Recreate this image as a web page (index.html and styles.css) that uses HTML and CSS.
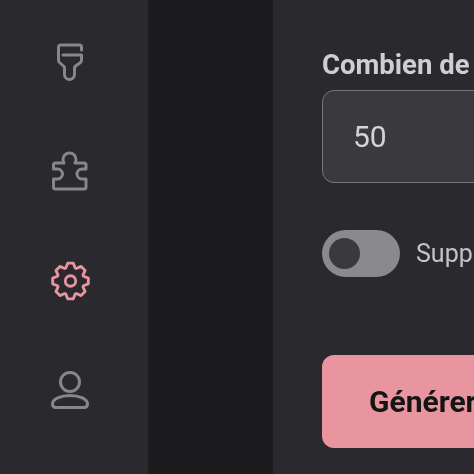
FILE: index.html
```html
<!DOCTYPE html>
<html lang="fr">
<head>
<meta charset="utf-8">
<title>Paramètres</title>
<link rel="stylesheet" href="styles.css">
</head>
<body>
<div class="app">
  <nav class="sidebar">
    <svg class="icon" viewBox="0 0 48 48" width="48" height="48"><path d="M35.500 14V11a2 2 0 0 0-2-2H15a2.500 2.500 0 0 0-2.500 2.500V24a3 3 0 0 0 1 2.500l4.500 4a2 2 0 0 1 .5 1.500V38.500a5 5 0 0 0 10 0V32a2 2 0 0 1 .5-1.500l5.500-4a3 3 0 0 0 1-2.500V19H17"/></svg>
    <svg class="icon" viewBox="0 -2 48 48" width="48" height="48"><path d="M9.500 15H18c-1-1.500-1-3-1-3.500a6.500 6.500 0 0 1 13 0c0 .5 0 2-1 3.500H38a2 2 0 0 1 2 2v4h-4a5 5 0 0 0 0 10h4v8a2 2 0 0 1-2 2H9.500a2 2 0 0 1-2-2V31h4a5 5 0 0 0 0-10h-4v-4a2 2 0 0 1 2-2z"/></svg>
    <svg class="icon active" viewBox="0 -2 48 48" width="48" height="48"><g transform="translate(24.500 23) scale(.95)"><circle r="5.500"/><polygon points="-4.960,-13.630 -2.970,-18.770 2.970,-18.770 4.960,-13.630 6.130,-13.140 11.170,-15.370 15.370,-11.170 13.140,-6.130 13.630,-4.960 18.770,-2.970 18.770,2.970 13.630,4.960 13.140,6.130 15.370,11.170 11.170,15.370 6.130,13.140 4.960,13.630 2.970,18.770 -2.970,18.770 -4.960,13.630 -6.130,13.140 -11.170,15.370 -15.370,11.170 -13.140,6.130 -13.630,4.960 -18.770,2.970 -18.770,-2.970 -13.630,-4.960 -13.140,-6.130 -15.370,-11.170 -11.170,-15.370 -6.130,-13.140"/></g></svg>
    <svg class="icon" viewBox="0 0 48 48" width="48" height="48"><circle cx="24" cy="16" r="9.500"/><path d="M6.500 38c0-5 8-8.500 17.500-8.500s17.500 3.500 17.500 8.500c0 2.500-1 3.500-3.500 3.500H10c-2.500 0-3.500-1-3.500-3.500z"/></svg>
  </nav>
  <div class="gutter"></div>
  <main class="panel">
    <label class="label">Combien de questions souhaitez-vous</label>
    <div class="input">50</div>
    <div class="toggle-row">
      <span class="toggle"><span class="knob"></span></span>
      <span class="toggle-text">Supprimer les questions existantes</span>
    </div>
    <button class="submit">Générer les questions</button>
  </main>
</div>
</body>
</html>
```
FILE: styles.css
```css
html, body {
  margin: 0;
  height: 100%;
  overflow: hidden;
  background: #1c1c1e;
}
.app {
  display: flex;
  width: 474px;
  height: 474px;
  overflow: hidden;
  font-family: Roboto, sans-serif;
  filter: blur(0.6px);
}
.sidebar {
  flex: 0 0 148px;
  background: #2a2a2e;
  display: flex;
  flex-direction: column;
  align-items: center;
  padding-top: 36px;
  gap: 62px;
  box-sizing: border-box;
  padding-right: 8px;
}
.icon {
  fill: none;
  stroke: #87878a;
  stroke-width: 3;
  stroke-linejoin: round;
  stroke-linecap: round;
}
.icon.active {
  stroke: #e8959f;
}
.gutter {
  flex: 0 0 125px;
  background: #1c1c1e;
}
.panel {
  flex: 0 0 600px;
  background: #2a2a2e;
  padding: 47px 0 0 49px;
  box-sizing: border-box;
}
.label {
  display: block;
  font-size: 27.500px;
  font-weight: 700;
  line-height: 36px;
  color: #cfcfd1;
  white-space: nowrap;
}
.input {
  margin-top: 7px;
  width: 500px;
  height: 93px;
  box-sizing: border-box;
  border: 1.500px solid #77777a;
  border-radius: 12px;
  background: #3a3a3e;
  color: #d4d4d6;
  font-size: 30px;
  padding-left: 30px;
  display: flex;
  align-items: center;
}
.toggle-row {
  margin-top: 47px;
  display: flex;
  align-items: center;
  gap: 16px;
}
.toggle {
  width: 78px;
  height: 47px;
  border-radius: 24px;
  background: #8a8a8c;
  display: flex;
  align-items: center;
  padding-left: 7px;
  box-sizing: border-box;
}
.knob {
  width: 31px;
  height: 31px;
  border-radius: 50%;
  background: #3a3a3e;
}
.toggle-text {
  font-size: 25px;
  color: #c4c4c6;
  white-space: nowrap;
}
.submit {
  display: block;
  margin-top: 78px;
  width: 500px;
  height: 93px;
  border: 0;
  border-radius: 12px;
  background: #e8959f;
  color: #151515;
  font-family: Roboto, sans-serif;
  font-size: 30px;
  font-weight: 700;
  text-align: left;
  padding-left: 47px;
}
```
